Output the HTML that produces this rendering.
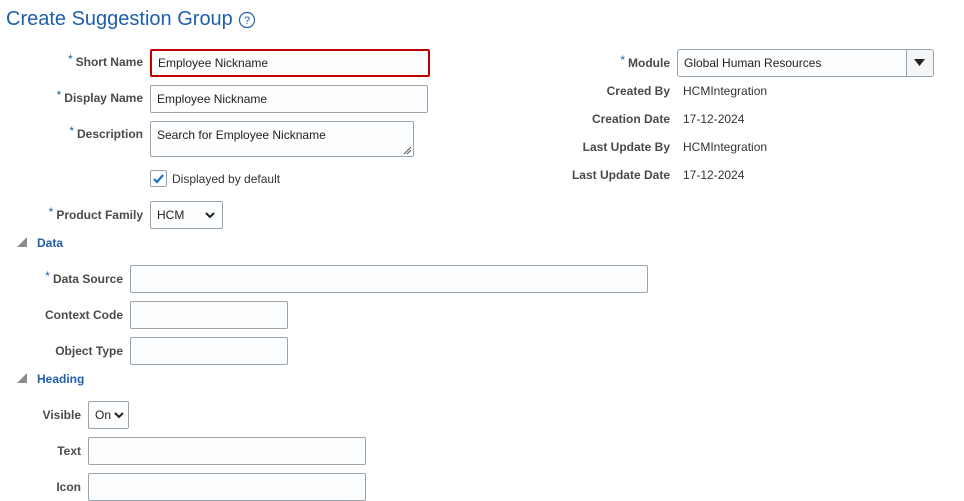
<!DOCTYPE html>
<html><head><meta charset="utf-8"><style>
body{margin:0;width:964px;height:501px;background:#fff;font-family:"Liberation Sans",Arial,sans-serif;position:relative;overflow:hidden}
.a{position:absolute}
.t{font-size:20px;color:#1f5fae;left:6px;top:8px;white-space:nowrap}
.l{font-size:12px;font-weight:bold;color:#4a4a4a;text-align:right;white-space:nowrap;line-height:14px;height:14px}
.l i{font-style:normal;color:#1f5fae;font-weight:normal;position:relative;top:-3px;margin-right:3px}
.v{font-size:12px;color:#333;white-space:nowrap;line-height:14px}
.b{box-sizing:border-box;border:1px solid #9aa4ad;border-radius:2px;background:#fcfdfe;font-size:12px;color:#222;padding:0 6px;line-height:14px}
.h{font-size:12px;font-weight:bold;color:#1f5fae}
.tri{width:0;height:0;border-left:10px solid transparent;border-bottom:10px solid #8c8c8c}
</style></head><body>
<div class="a t">Create Suggestion Group</div>
<svg class="a" style="left:238px;top:11px" width="18" height="18" viewBox="0 0 18 18"><circle cx="9" cy="9" r="7.5" fill="none" stroke="#1f5fae" stroke-width="1.2"/><text x="9" y="13" text-anchor="middle" font-size="11" fill="#1f5fae" font-family="Liberation Sans">?</text></svg>

<div class="a l" style="right:821px;top:55px"><i>*</i>Short Name</div>
<div class="a b" style="left:150px;top:49px;width:280px;height:28px;border:2px solid #c00000;padding-top:5px">Employee Nickname</div>
<div class="a l" style="right:821px;top:91px"><i>*</i>Display Name</div>
<div class="a b" style="left:150px;top:85px;width:278px;height:28px;padding-top:6px">Employee Nickname</div>
<div class="a l" style="right:821px;top:127px"><i>*</i>Description</div>
<div class="a b" style="left:150px;top:121px;width:264px;height:36px;padding-top:6px">Search for Employee Nickname</div>
<svg class="a" style="left:403px;top:146px" width="9" height="9"><path d="M8 1L1 8M8 4L4 8" stroke="#555" stroke-width="1"/></svg>
<div class="a b" style="left:150px;top:170px;width:17px;height:17px;padding:0"></div>
<svg class="a" style="left:151px;top:171px" width="15" height="15"><path d="M3 8l3 3l6-7" fill="none" stroke="#1f6fc5" stroke-width="2.2"/></svg>
<div class="a v" style="left:172px;top:172px">Displayed by default</div>
<div class="a l" style="right:821px;top:208px"><i>*</i>Product Family</div>
<div class="a b" style="left:150px;top:201px;width:73px;height:28px;padding-top:6px">HCM</div>
<svg class="a" style="left:205px;top:211px" width="10" height="8"><path d="M1 2l4 4l4-4" fill="none" stroke="#222" stroke-width="2"/></svg>

<div class="a tri" style="left:17px;top:237px"></div>
<div class="a h" style="left:37px;top:236px">Data</div>
<div class="a l" style="right:841px;top:272px"><i>*</i>Data Source</div>
<div class="a b" style="left:130px;top:265px;width:518px;height:28px"></div>
<div class="a l" style="right:841px;top:308px">Context Code</div>
<div class="a b" style="left:130px;top:301px;width:158px;height:28px"></div>
<div class="a l" style="right:841px;top:344px">Object Type</div>
<div class="a b" style="left:130px;top:337px;width:158px;height:28px"></div>

<div class="a tri" style="left:17px;top:373px"></div>
<div class="a h" style="left:37px;top:372px">Heading</div>
<div class="a l" style="right:883px;top:408px">Visible</div>
<div class="a b" style="left:88px;top:401px;width:41px;height:28px;padding:6px 0 0 6px">On</div>
<svg class="a" style="left:114px;top:411px" width="10" height="8"><path d="M1 2l4 4l4-4" fill="none" stroke="#222" stroke-width="2"/></svg>
<div class="a l" style="right:883px;top:444px">Text</div>
<div class="a b" style="left:88px;top:437px;width:278px;height:28px"></div>
<div class="a l" style="right:883px;top:480px">Icon</div>
<div class="a b" style="left:88px;top:473px;width:278px;height:28px"></div>

<div class="a l" style="right:294px;top:56px"><i>*</i>Module</div>
<div class="a b" style="left:677px;top:49px;width:257px;height:28px;padding-top:6px;border-radius:3px">Global Human Resources</div>
<div class="a" style="left:906px;top:50px;width:26px;height:26px;border-left:1px solid #9aa4ad;background:#f3f5f7;border-radius:0 3px 3px 0"></div>
<svg class="a" style="left:914px;top:59px" width="12" height="8"><path d="M0 0h11L5.5 7z" fill="#222"/></svg>
<div class="a l" style="right:294px;top:84px">Created By</div><div class="a v" style="left:683px;top:84px">HCMIntegration</div>
<div class="a l" style="right:294px;top:112px">Creation Date</div><div class="a v" style="left:683px;top:112px">17-12-2024</div>
<div class="a l" style="right:294px;top:140px">Last Update By</div><div class="a v" style="left:683px;top:140px">HCMIntegration</div>
<div class="a l" style="right:294px;top:168px">Last Update Date</div><div class="a v" style="left:683px;top:168px">17-12-2024</div>
</body></html>
